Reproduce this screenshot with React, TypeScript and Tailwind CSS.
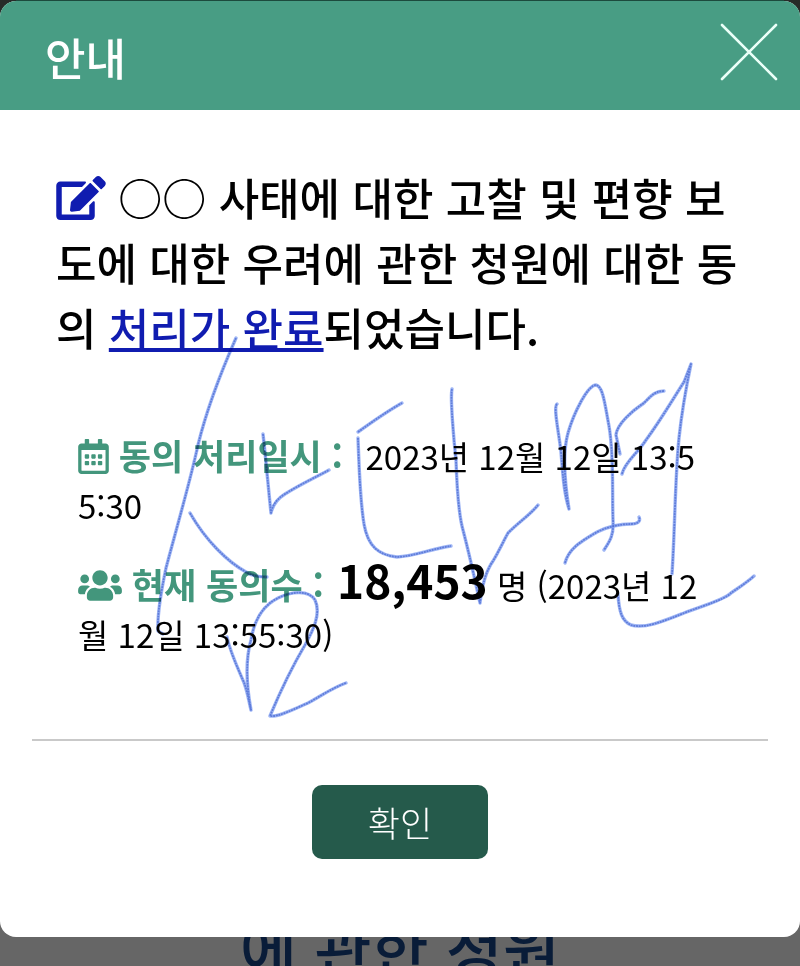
import React, { useState } from 'react';
import { FaEdit, FaRegCalendarAlt, FaUsers } from 'react-icons/fa';

// Pen strokes drawn over the notice
const strokes = [
  'M236 338 C221 372 206 412 198 445 C190 482 176 530 166 568 C161 592 157 615 158 631 L163 634',
  'M190 513 C206 541 228 562 246 572 C252 576 260 577 267 577',
  'M263 434 C266 460 268 485 271 513 C273 504 277 499 285 494 C299 485 316 477 329 470',
  'M227 637 C230 651 236 664 242 678 C247 688 248 698 251 710 C245 678 247 654 251 640 C254 621 262 606 278 598 C292 591 309 590 315 600 C322 615 311 634 305 645 C292 667 280 692 270 716 C279 717 294 709 308 703 C321 696 332 688 346 683',
  'M358 432 C372 422 386 412 402 403',
  'M358 438 C359 465 360 500 364 524 C368 547 379 555 397 557 C415 556 431 549 451 546',
  'M452 389 C450 398 454 442 456 460 C457 490 459 516 463 530 C470 557 475 580 480 603 C482 585 486 571 493 561 C499 551 503 542 508 533 C520 521 530 515 538 505',
  'M557 404 C553 407 559 433 561 452 C563 477 564 493 569 509 C564 478 563 451 568 433 C574 412 588 385 596 385 C603 386 605 405 609 426 C614 455 612 491 613 520 C614 535 610 541 604 550',
  'M565 563 C569 548 582 541 597 532 C607 527 619 524 631 524 C638 524 641 521 639 517',
  'M664 391 C655 391 651 396 644 403 C632 411 617 424 616 435 L620 454',
  'M622 474 C625 462 637 454 646 440 C660 421 673 399 684 382 L691 364 C686 388 682 410 679 438 C675 478 675 528 672 574',
  'M618 594 C619 612 622 621 631 625 C645 629 664 621 684 613 C702 606 724 600 731 593 C738 588 745 584 754 576',
];

const Handwriting: React.FC = () => (
  <svg
    className="absolute left-0 top-0 z-20 pointer-events-none mix-blend-multiply"
    width="800"
    height="966"
    viewBox="0 0 800 966"
    fill="none"
    strokeLinecap="round"
    strokeLinejoin="round"
    aria-hidden="true"
  >
    {strokes.map(d => (
      <g key={d}>
        <path d={d} stroke="#7f9df2" strokeOpacity="0.75" strokeWidth="3.4" />
        <path d={d} stroke="#3556c8" strokeOpacity="0.6" strokeWidth="1.8" strokeLinecap="butt" strokeDasharray="2 0.7" />
      </g>
    ))}
  </svg>
);

const App: React.FC = () => {
  const [isOpen, setIsOpen] = useState(true);
  const close = () => setIsOpen(false);

  return (
    <div
      lang="ko"
      className="relative flex flex-col h-screen overflow-hidden bg-[#666666] font-['Noto_Sans_CJK_KR','Noto_Sans',sans-serif]"
    >
      {/* Dimmed page header */}
      <div className="h-5 flex-shrink-0 px-4 bg-[#272b28]">
        <div className="h-1 bg-[#1c4a3d]" />
      </div>

      {isOpen && (
        <section
          role="dialog"
          aria-labelledby="notice-title"
          className="relative z-10 -mt-[19px] flex-shrink-0 rounded-2xl overflow-hidden bg-white"
        >
          <header className="flex items-center justify-between pt-6 pb-[21px] pl-[45px] pr-5 bg-[#489d84]">
            <h1 id="notice-title" className="text-[44px] leading-[64px] font-medium text-white">안내</h1>
            <button type="button" onClick={close} aria-label="닫기" className="-mt-2.5 cursor-pointer">
              <svg width="62" height="62" viewBox="0 0 62 62" stroke="#eafff8" strokeWidth="2.6" strokeLinecap="round">
                <path d="M4 4 L58 58 M58 4 L4 58" />
              </svg>
            </button>
          </header>

          <div className="px-14 pt-[55px] break-all text-black">
            <p className="text-[44px] leading-[65px] font-medium">
              <FaEdit className="inline-block w-[50px] h-[44px] -mt-3 text-[#101cb0]" />
              {' ○○ 사태에 대한 고찰 및 편향 보도에 대한 우려에 관한 청원에 대한 동의 '}
              <a href="#result" className="text-[#101cb0] underline decoration-4 underline-offset-2">처리가 완료</a>
              되었습니다.
            </p>

            <div className="pl-[22px] pr-9 pt-[70px] text-[33px] leading-[49px]">
              <p>
                <strong className="mr-1 text-[35px] font-bold text-[#43967c]">
                  <FaRegCalendarAlt className="inline-block w-[31px] h-[35px] -mt-2" /> 동의 처리일시 :
                </strong>
                {' \u00a02023년 12월 12일 13:55:30'}
              </p>
              <p className="mt-[25px]">
                <strong className="mr-1 text-[35px] font-bold text-[#43967c]">
                  <FaUsers className="inline-block w-[44px] h-[35px] -mt-2" /> 현재 동의수 :
                </strong>{' '}
                <strong className="text-[46px] font-bold">18,453</strong> 명 (2023년 12월 12일 13:55:30)
              </p>
            </div>
          </div>

          <footer className="mx-8 mt-20 pt-11 pb-[78px] border-t-2 border-[#c9c9c9] text-center">
            <button
              type="button"
              onClick={close}
              className="w-44 h-[74px] rounded-[10px] bg-[#255a4b] text-[35px] font-light text-white cursor-pointer"
            >
              확인
            </button>
          </footer>
        </section>
      )}

      <h2 className="-mt-8 flex-shrink-0 text-center text-[62px] leading-[84px] font-medium text-[#091c38]">
        에 관한 청원
      </h2>

      <Handwriting />
    </div>
  );
};

export default App;
